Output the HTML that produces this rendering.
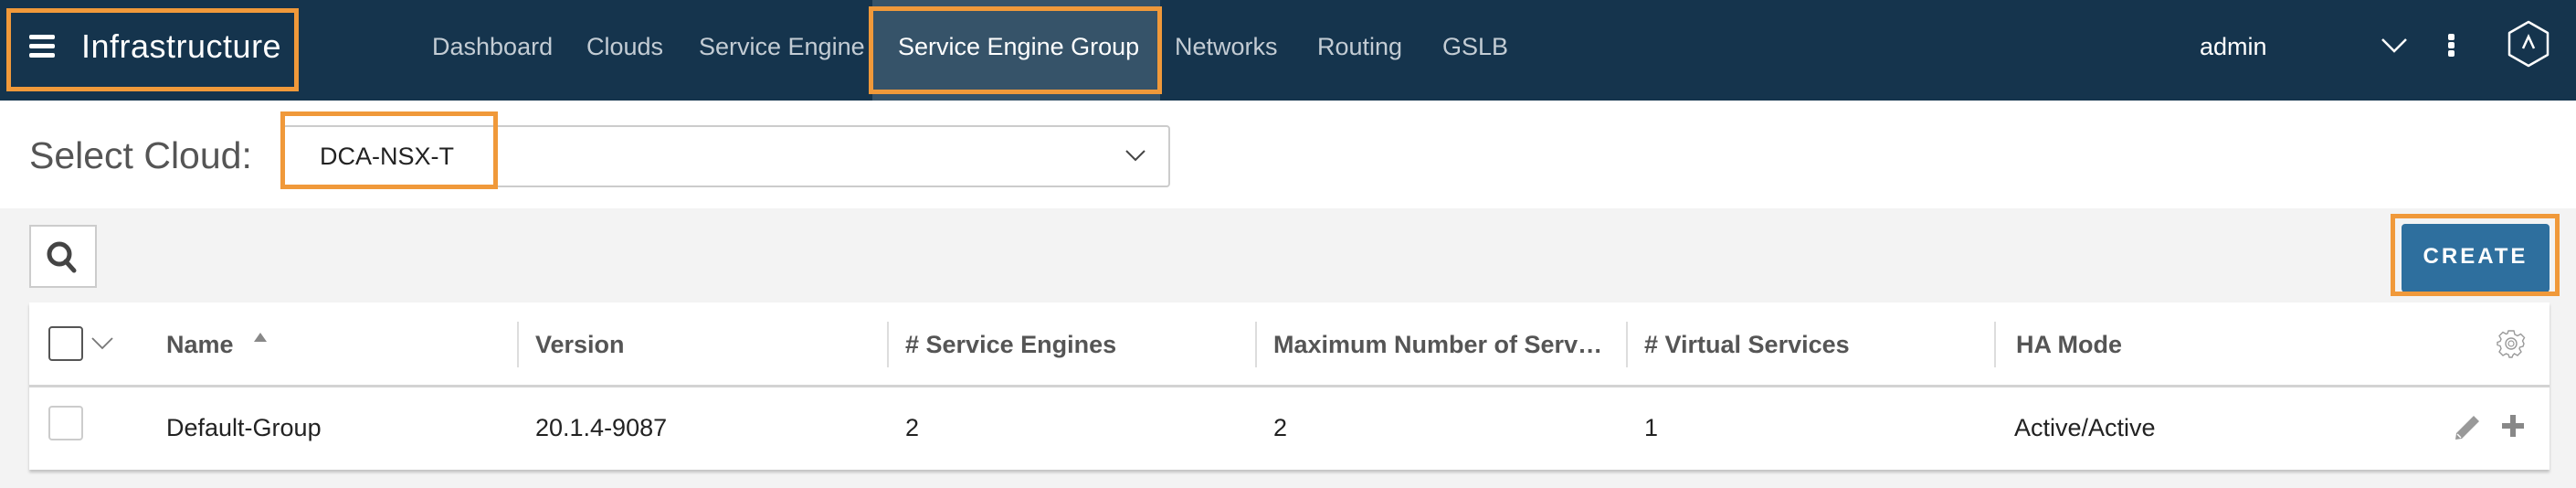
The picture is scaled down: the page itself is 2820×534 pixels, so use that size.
<!DOCTYPE html>
<html><head><meta charset="utf-8"><style>
*{box-sizing:border-box;margin:0;padding:0}
body{width:2820px;height:534px;overflow:hidden;background:#f3f3f3;font-family:"Liberation Sans",sans-serif;position:relative}
.abs{position:absolute}
.nav{left:0;top:0;width:2820px;height:110px;background:#15344d}
.ni{top:0;height:110px;line-height:102px;color:#c3ccd4;font-size:27px;white-space:nowrap}
.ob{border:5px solid #f0993a}
.th{top:331px;height:92px;line-height:92px;font-size:27px;font-weight:bold;color:#555;white-space:nowrap}
.td{top:423px;height:90px;line-height:90px;font-size:27px;color:#222;white-space:nowrap}
.dv{top:352px;width:2px;height:50px;background:#ddd}
</style></head><body>
<div class="abs nav"></div>
<div class="abs" style="left:32px;top:38px;width:28px;height:5px;background:#fff;border-radius:2px"></div>
<div class="abs" style="left:32px;top:48px;width:28px;height:5px;background:#fff;border-radius:2px"></div>
<div class="abs" style="left:32px;top:58px;width:28px;height:5px;background:#fff;border-radius:2px"></div>
<div class="abs" style="left:89px;top:0;height:102px;line-height:102px;color:#fff;font-size:36px;letter-spacing:0.5px">Infrastructure</div>
<div class="abs ob" style="left:7px;top:9px;width:320px;height:91px"></div>
<div class="abs" style="left:955px;top:0;width:315px;height:110px;background:#365369"></div>
<div class="abs ni" style="left:473px">Dashboard</div>
<div class="abs ni" style="left:642px">Clouds</div>
<div class="abs ni" style="left:765px">Service Engine</div>
<div class="abs ni" style="left:983px;color:#fff">Service Engine Group</div>
<div class="abs ni" style="left:1286px">Networks</div>
<div class="abs ni" style="left:1442px">Routing</div>
<div class="abs ni" style="left:1579px">GSLB</div>
<div class="abs ob" style="left:951px;top:7px;width:321px;height:96px"></div>
<div class="abs" style="left:2408px;top:0;height:102px;line-height:102px;color:#fff;font-size:27px">admin</div>
<svg class="abs" style="left:2606px;top:40px" width="30" height="20"><path d="M2 3 L15 16 L28 3" stroke="#fff" stroke-width="2.5" fill="none"/></svg>
<div class="abs" style="left:2680px;top:37px;width:7px;height:7px;background:#fff;border-radius:2px"></div>
<div class="abs" style="left:2680px;top:46px;width:7px;height:7px;background:#fff;border-radius:2px"></div>
<div class="abs" style="left:2680px;top:55px;width:7px;height:7px;background:#fff;border-radius:2px"></div>
<svg class="abs" style="left:2744px;top:22px" width="48" height="52"><path d="M24 2 L45 14 L45 38 L24 50 L3 38 L3 14 Z" stroke="#fff" stroke-width="2.5" fill="none" stroke-linejoin="round"/><path d="M18 31 L24 18 L30 31" stroke="#fff" stroke-width="2.5" fill="none"/></svg>
<div class="abs" style="left:0;top:110px;width:2820px;height:118px;background:#fff"></div>
<div class="abs" style="left:32px;top:140px;line-height:60px;font-size:41px;color:#555">Select Cloud:</div>
<div class="abs" style="left:309px;top:137px;width:972px;height:68px;border:2px solid #ccc;border-radius:4px;background:#fff"></div>
<div class="abs" style="left:350px;top:137px;line-height:68px;font-size:27px;color:#222">DCA-NSX-T</div>
<svg class="abs" style="left:1231px;top:162px" width="24" height="16"><path d="M2 3 L12 13 L22 3" stroke="#444" stroke-width="2" fill="none"/></svg>
<div class="abs ob" style="left:307px;top:122px;width:238px;height:85px"></div>
<div class="abs" style="left:32px;top:246px;width:74px;height:69px;border:2px solid #ccc;background:#fff"></div>
<svg class="abs" style="left:48px;top:262px" width="40" height="40"><circle cx="17" cy="16" r="11" stroke="#444" stroke-width="5" fill="none"/><path d="M24 24 L33 34" stroke="#444" stroke-width="5" stroke-linecap="round"/></svg>
<div class="abs" style="left:2629px;top:245px;width:162px;height:75px;background:#2e6f9e;border-radius:4px;color:#fff;font-size:24px;font-weight:bold;letter-spacing:3px;text-align:center;line-height:72px">CREATE</div>
<div class="abs ob" style="left:2617px;top:234px;width:185px;height:90px"></div>
<div class="abs" style="left:32px;top:331px;width:2759px;height:183px;background:#fff;box-shadow:0 3px 3px rgba(0,0,0,.2)"></div>
<div class="abs" style="left:32px;top:421px;width:2759px;height:3px;background:#d3d3d3"></div>
<div class="abs" style="left:53px;top:357px;width:38px;height:38px;border:2px solid #555;border-radius:4px"></div>
<svg class="abs" style="left:99px;top:368px" width="28" height="16"><path d="M2 2 L13 13 L24 2" stroke="#777" stroke-width="1.8" fill="none"/></svg>
<div class="abs th" style="left:182px">Name</div>
<svg class="abs" style="left:277px;top:363px" width="16" height="12"><path d="M1 11 L8 1 L15 11Z" fill="#888"/></svg>
<div class="abs dv" style="left:566px"></div><div class="abs dv" style="left:971px"></div><div class="abs dv" style="left:1374px"></div><div class="abs dv" style="left:1780px"></div><div class="abs dv" style="left:2183px"></div>
<div class="abs th" style="left:586px">Version</div>
<div class="abs th" style="left:991px"># Service Engines</div>
<div class="abs th" style="left:1394px">Maximum Number of Serv…</div>
<div class="abs th" style="left:1800px"># Virtual Services</div>
<div class="abs th" style="left:2207px">HA Mode</div>
<svg class="abs" style="left:2733px;top:360px" width="32" height="32" viewBox="0 0 32 32"><path d="M13 2h6l1 4 3 1.5 3.5-2 4 4-2 3.5L30 16l-1 3 -3.5 1 -0.5 1.5 2 3.5-4 4-3.5-2L18 28.5 17 31h-3l-1-3-2.5-1-3.5 2-4-4 2-3.5L4 18.5 1 17.5v-3l3-1 1-2.5-2-3.5 4-4 3.5 2L12 5z" fill="none" stroke="#999" stroke-width="1.4"/><circle cx="16" cy="16" r="6" fill="none" stroke="#999" stroke-width="1.4"/><circle cx="16" cy="16" r="3" fill="none" stroke="#999" stroke-width="1.2"/></svg>
<div class="abs" style="left:53px;top:444px;width:38px;height:38px;border:2px solid #ccc;border-radius:4px"></div>
<div class="abs td" style="left:182px">Default-Group</div>
<div class="abs td" style="left:586px">20.1.4-9087</div>
<div class="abs td" style="left:991px">2</div>
<div class="abs td" style="left:1394px">2</div>
<div class="abs td" style="left:1800px">1</div>
<div class="abs td" style="left:2205px">Active/Active</div>
<svg class="abs" style="left:2686px;top:453px" width="30" height="30"><path d="M22 2 L28 8 L9 27 L2 28 L3 21 Z" fill="#999"/><path d="M4 22 L8 26" stroke="#fff" stroke-width="1.5"/></svg>
<div class="abs" style="left:2739px;top:463px;width:24px;height:6px;background:#888"></div>
<div class="abs" style="left:2748px;top:454px;width:6px;height:24px;background:#888"></div>
</body></html>
